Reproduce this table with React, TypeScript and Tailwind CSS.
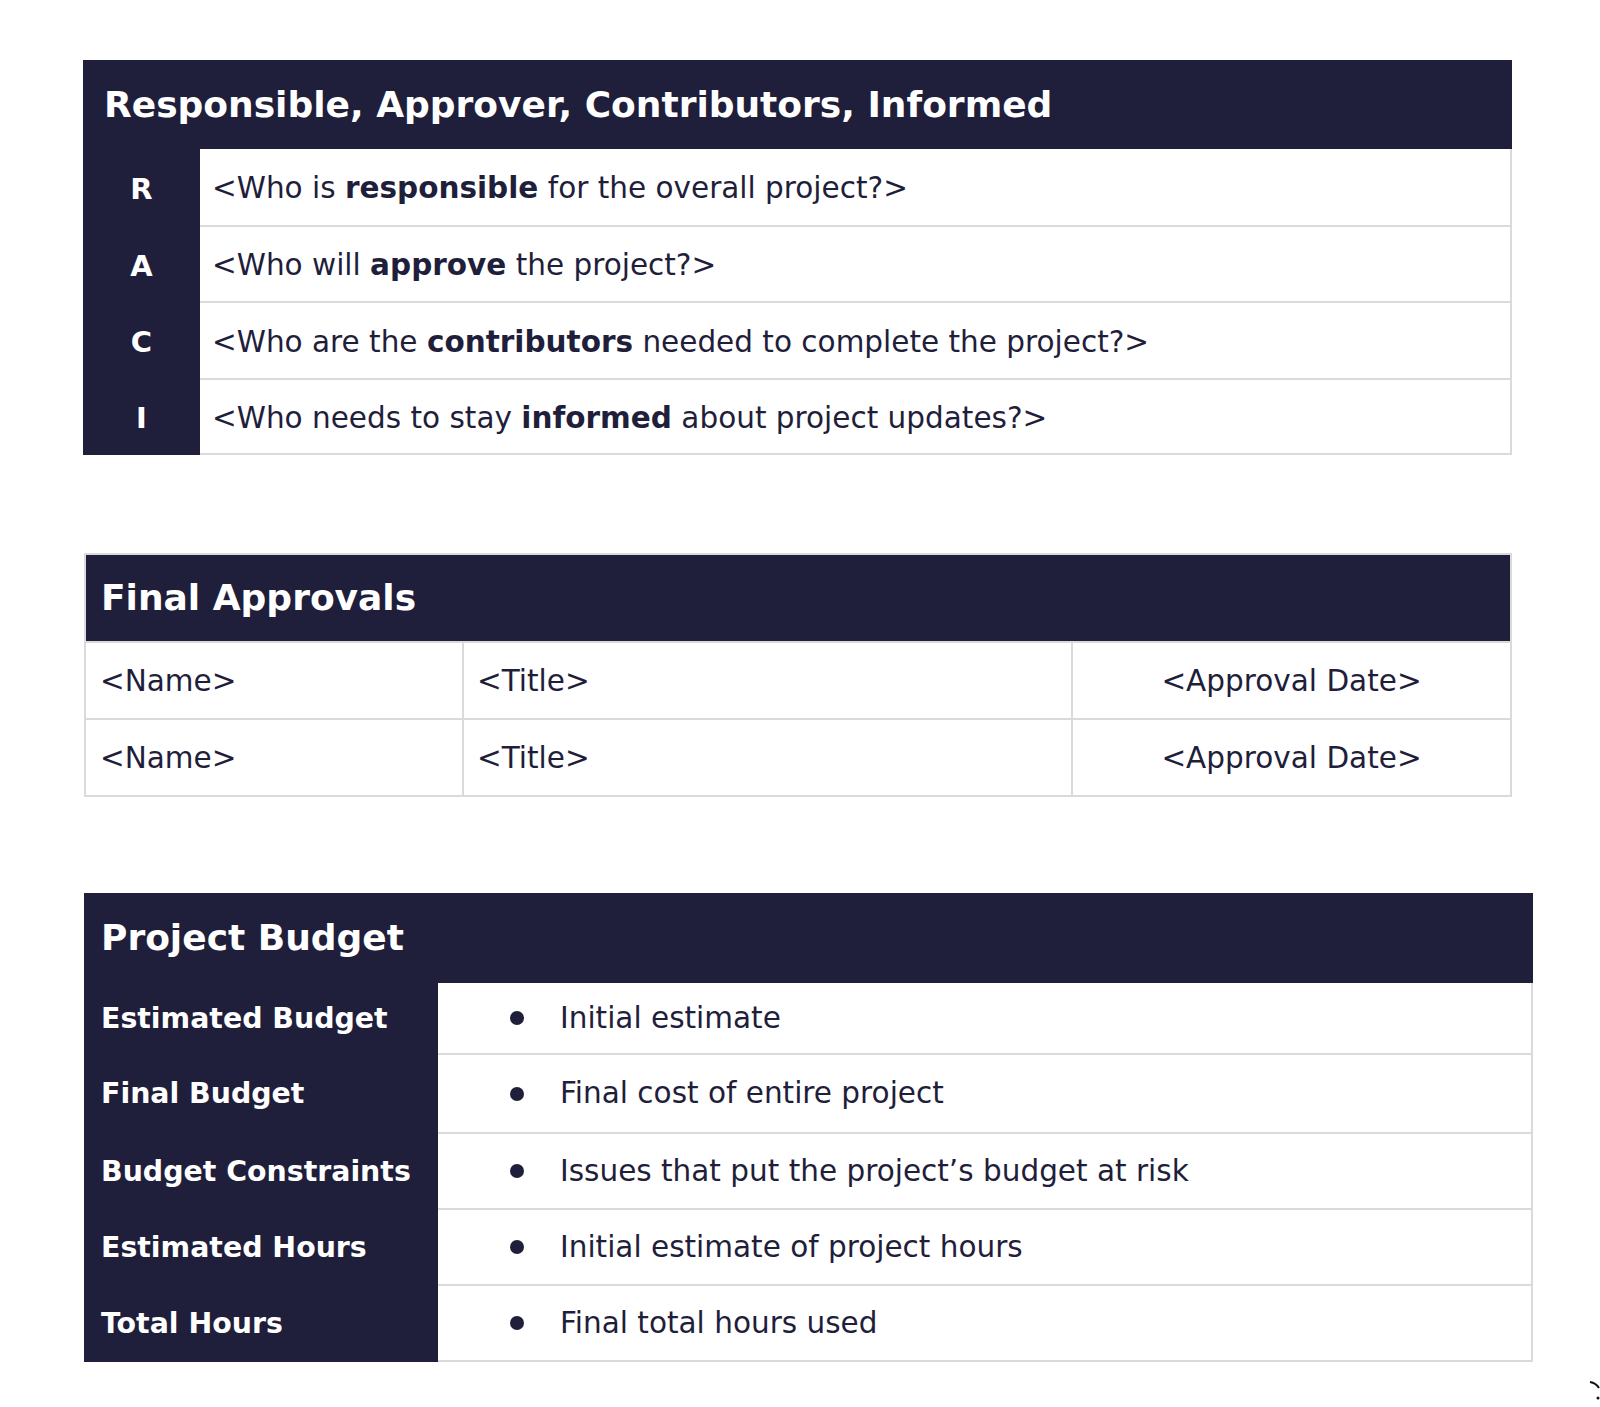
import React from "react";

const NAVY = "bg-[#1f1e3b]";

const raci = [
  { k: "R", h: "h-[77.5px]", pre: "<Who is ", b: "responsible", post: " for the overall project?>" },
  { k: "A", h: "h-[76.5px]", pre: "<Who will ", b: "approve", post: " the project?>" },
  { k: "C", h: "h-[77px]", pre: "<Who are the ", b: "contributors", post: " needed to complete the project?>" },
  { k: "I", h: "h-[75px]", pre: "<Who needs to stay ", b: "informed", post: " about project updates?>" },
];

const budget = [
  { k: "Estimated Budget", v: "Initial estimate", h: "h-[72px]" },
  { k: "Final Budget", v: "Final cost of entire project", h: "h-[79px]" },
  { k: "Budget Constraints", v: "Issues that put the project\u2019s budget at risk", h: "h-[76px]" },
  { k: "Estimated Hours", v: "Initial estimate of project hours", h: "h-[76px]" },
  { k: "Total Hours", v: "Final total hours used", h: "h-[76px]" },
];

export default function App() {
  return (
    <div className="relative min-h-[1407px] bg-white font-['DejaVu_Sans',sans-serif] text-[#1f1e3b]">
      <div className="flex flex-col pt-[60px] pl-[83px]">
        {/* RACI */}
        <div className={`w-[1429px] ${NAVY}`}>
          <div className="h-[89px] flex items-center pl-[21px] text-white font-bold text-[36px]">
            Responsible, Approver, Contributors, Informed
          </div>
          <div className="flex">
            <div className="w-[117px] flex flex-col">
              {raci.map((r) => (
                <div key={r.k} className={`${r.h} flex items-center justify-center pt-[3px] text-white font-bold text-[29px]`}>
                  {r.k}
                </div>
              ))}
            </div>
            <div className="flex-1 bg-white flex flex-col border-r-2 border-[#dadada]">
              {raci.map((r) => (
                <div key={r.k} className={`${r.h} flex items-center pl-[12px] pt-[3px] border-b-2 border-[#dadada] text-[29.5px]`}>
                  <span>
                    {r.pre}
                    <b className="font-bold">{r.b}</b>
                    {r.post}
                  </span>
                </div>
              ))}
            </div>
          </div>
        </div>

        {/* Final approvals */}
        <div className="mt-[98px] ml-[1px] w-[1428px] border-2 border-[#dadada]">
          <div className={`h-[86px] flex items-center pl-[15px] ${NAVY} text-white font-bold text-[36px]`}>
            Final Approvals
          </div>
          {[0, 1].map((i) => (
            <div key={i} className="flex h-[77px] text-[29.5px] border-t-2 border-[#dadada]">
              <div className="w-[378px] flex items-center pl-[14px] pt-[2px] border-r-2 border-[#dadada]">&lt;Name&gt;</div>
              <div className="w-[609px] flex items-center pl-[13px] pt-[2px] border-r-2 border-[#dadada]">&lt;Title&gt;</div>
              <div className="flex-1 flex items-center justify-center pt-[2px]">&lt;Approval Date&gt;</div>
            </div>
          ))}
        </div>

        {/* Project budget */}
        <div className={`mt-[96px] ml-[1px] w-[1449px] ${NAVY}`}>
          <div className="h-[90px] flex items-center pl-[17px] text-white font-bold text-[36px]">Project Budget</div>
          <div className="flex flex-col">
            {budget.map((r) => (
              <div key={r.k} className={`flex ${r.h}`}>
                <div className="w-[354px] flex items-center pl-[17px] text-white font-bold text-[28.4px]">{r.k}</div>
                <div className="flex-1 bg-white flex items-center border-b-2 border-r-2 border-[#dadada] text-[29.5px]">
                  <span className="ml-[72px] w-[14px] h-[14px] rounded-full bg-[#1f1e3b]" />
                  <span className="ml-[36px]">{r.v}</span>
                </div>
              </div>
            ))}
          </div>
        </div>
      </div>
      <svg className="absolute left-[1588px] top-[1378px]" width="12" height="24" viewBox="0 0 12 24">
        <path d="M2 4 Q8 5 11 10" stroke="#111" strokeWidth="2" fill="none" />
        <circle cx="10" cy="20" r="1.5" fill="#111" />
      </svg>
    </div>
  );
}
